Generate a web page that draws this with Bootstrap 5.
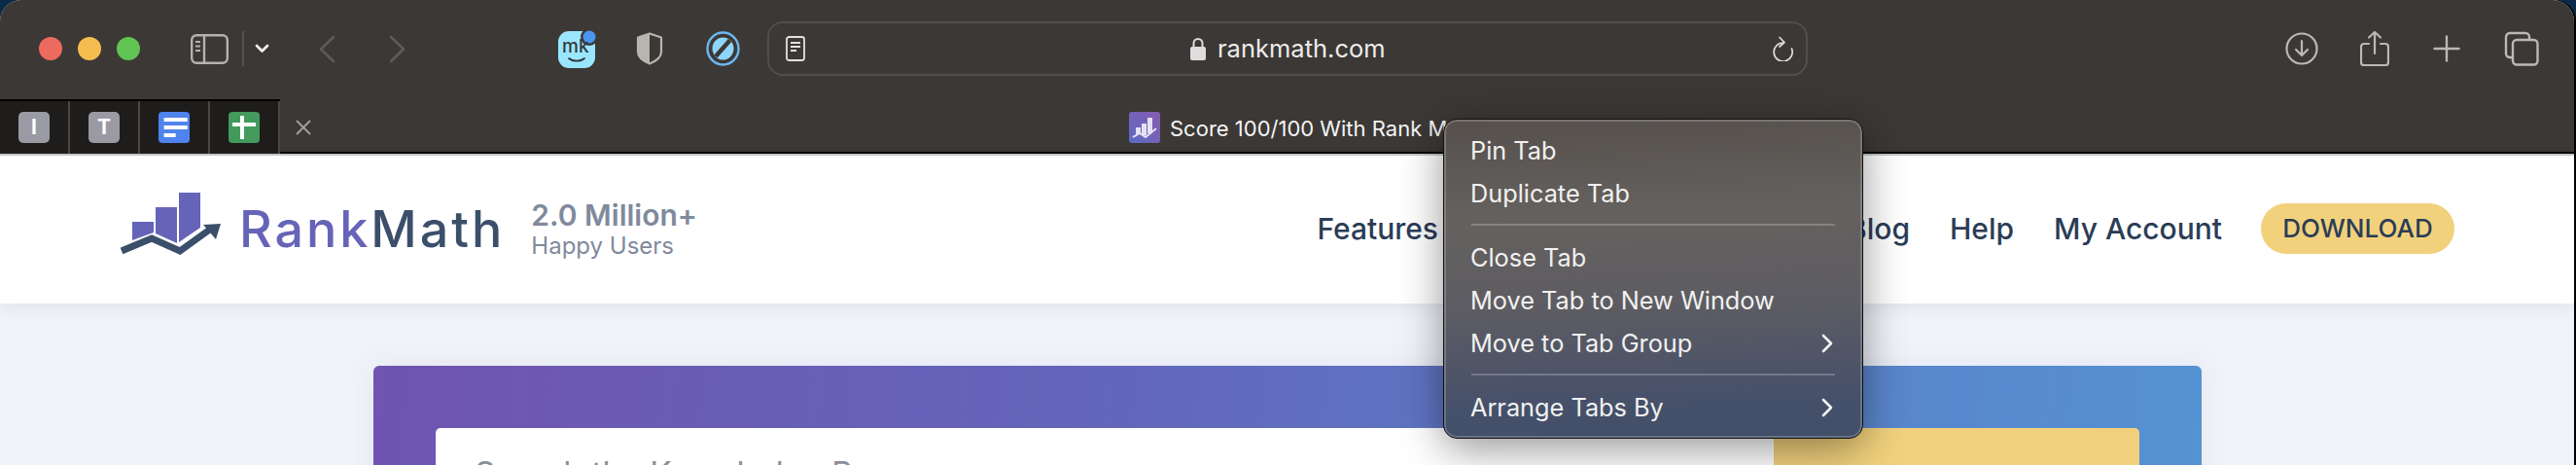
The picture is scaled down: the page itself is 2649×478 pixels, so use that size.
<!DOCTYPE html>
<html lang="en">
<head>
  <meta charset="UTF-8">
  <title>Score 100/100 With Rank Math</title>
  <link href="https://cdn.jsdelivr.net/npm/bootstrap@5.3.3/dist/css/bootstrap.min.css" rel="stylesheet">
  <style>
    html, body { height: 478px; overflow: hidden; }
    body { background: #0b2a47; font-family: Inter, "Liberation Sans", sans-serif; }

    /* safari window */
    .win { width: 2647px; height: 478px; margin-left: 0; border-radius: 22px 22px 0 0; overflow: hidden; background: #f0f3f8; position: relative; box-shadow: 2px 0 0 #000; }
    .chrome { background: #3c3835; height: 160px; border-bottom: 2px solid #c9c9c9; box-shadow: inset 0 -2px 0 #000; border-left: 0; }
    .toolbar { height: 102px; padding: 0 0 2px 40px; }
    .dot { width: 24px; height: 24px; border-radius: 50%; margin-right: 16px; }
    .dot-r { background: #ee6a5f; }
    .dot-y { background: #f5bd4f; }
    .dot-g { background: #61c554; }
    .sb-icon { margin-left: 36px; }
    .sb-sep { width: 2px; height: 36px; background: #55514e; margin-left: 14px; }
    .sb-chev { margin-left: 11px; }
    .nav-back { margin-left: 51px; }
    .nav-fwd { margin-left: 55px; }
    .ext-mk { margin-left: 157px; }
    .ext-shield { margin-left: 41px; }
    .ext-block { margin-left: 44px; }
    .addr { width: 1070px; height: 56px; margin-left: 28px; border: 2px solid #524e4b; border-radius: 16px; padding: 0 13px 0 17px; color: #ececeb; }
    .addr-host { font-size: 25.5px; line-height: 1; letter-spacing: 0; }
    .addr-mid { padding-left: 396px; gap: 12px; }
    .tool-dl { margin-left: 491px; }
    .tool-share { margin-left: 43px; }
    .tool-plus { margin-left: 45px; }
    .tool-copy { margin-left: 45px; }

    .tabrow { height: 56px; color: #fff; }
    .pinned { width: 288px; height: 56px; background: #1e1d1c; border-top: 2px solid #000; }
    .pin { width: 72px; height: 54px; border-right: 2px solid #4a4846; }
    .pin-ic { width: 32px; height: 32px; border-radius: 5px; color: #fff; font-size: 21px; font-weight: 700; line-height: 32px; text-align: center; }
    .pin-grey { background: #9a9aa4; }
    .pin-close { margin-left: 16px; margin-top: 2px; }
    .tab-fav { margin-left: 841px; margin-top: 2px; }
    .tab-title { margin-left: 10px; margin-top: 4px; font-size: 22px; white-space: nowrap; color: #f4f4f4; }

    /* context menu */
    .tab-menu.dropdown-menu { position: absolute; display: block; left: 1484px; top: 122px; width: 432px; height: 329px; padding: 10px 0 0; margin: 0; border-radius: 14px;
      background: linear-gradient(178deg, #55504c 0%, #65615e 30%, #5d5c63 58%, #45506a 88%, #434e68 100%);
      border: 1px solid #111; box-shadow: inset 0 0 0 2px rgba(255,255,255,.2), 0 10px 44px rgba(0,0,0,.42); }
    .tab-menu .dropdown-item { color: #f1f1f0; font-size: 25.3px; line-height: 44px; height: 44px; padding: 0 27px; display: flex; justify-content: space-between; align-items: center; background: none; }
    .tab-menu .dropdown-divider { border-top: 2px solid rgba(255,255,255,.22); opacity: 1; margin: 9px 28px 11px 28px; }
    .menu-arrow { margin-right: 3px; }

    /* rank math page */
    .site-head { height: 152px; background: #fff; padding: 0 123px 0 124px; box-shadow: 0 4px 16px rgba(40,60,100,.08); }
    .logo-mark { margin-top: -8px; }
    .logo-word { font-size: 52px; font-weight: 500; line-height: 1; margin-left: 14px; letter-spacing: 3px; }
    .logo-a { color: #6664b8; }
    .logo-b { color: #3b4f6b; }
    .logo-stat { margin-left: 27px; color: #7f8a9c; }
    .stat-num { font-size: 30px; font-weight: 600; line-height: 34px; }
    .stat-sub { font-size: 24px; line-height: 30px; }
    .site-nav { gap: 41px; margin-left: auto; margin-top: -3px; }
    .site-nav .nav-link { color: #2b3c56; font-size: 30px; font-weight: 500; padding: 0; line-height: 1.2; }
    .nav-first { margin-right: 380px; }
    .btn-dl.btn { background: #f1d17c; border: 0; border-radius: 26px; width: 199px; height: 52px; color: #2b3c56; font-size: 26px; font-weight: 500; padding: 0; margin-left: -1px; }

    .hero { margin: 64px 0 0 384px; width: 1880px; height: 200px; padding: 64px 64px 0 64px; border-radius: 6px; background: linear-gradient(95deg, #6f54b0 0%, #6366bb 40%, #5593d3 100%); box-shadow: 0 0 30px rgba(80,90,170,.08); }
    .search-in { height: 100px; background: #fff; border-radius: 5px 0 0 0; padding: 22px 0 0 40px; color: #8a8f98; font-size: 33.5px; }
    .search-btn { width: 376px; height: 100px; background: #f1d17c; border-radius: 0 5px 0 0; }
  </style>
</head>
<body>

<div class="win">
  <!-- browser toolbar -->
  <div class="chrome">
    <div class="toolbar d-flex align-items-center">
      <span class="dot dot-r"></span>
      <span class="dot dot-y"></span>
      <span class="dot dot-g"></span>
      <svg class="sb-icon" width="39" height="31" viewBox="0 0 39 31" fill="none" stroke="#b6b2ae" stroke-width="2.4"><rect x="1.2" y="1.2" width="36.6" height="28.6" rx="5"/><path d="M14 1v29"/><path d="M5 8h5M5 12.500h5M5 17h5" stroke-width="1.800"/></svg>
      <span class="sb-sep"></span>
      <svg class="sb-chev" width="15" height="10" viewBox="0 0 15 10" fill="none" stroke="#eeeeec" stroke-width="2.800" stroke-linecap="round" stroke-linejoin="round"><path d="M2 2l5.500 5.500L13 2"/></svg>
      <svg class="nav-back" width="17" height="29" viewBox="0 0 17 29" fill="none" stroke="#5f5b58" stroke-width="2.600" stroke-linecap="round" stroke-linejoin="round"><path d="M15 2L2 14.500 15 27"/></svg>
      <svg class="nav-fwd" width="17" height="29" viewBox="0 0 17 29" fill="none" stroke="#5f5b58" stroke-width="2.600" stroke-linecap="round" stroke-linejoin="round"><path d="M2 2l13 12.500L2 27"/></svg>

      <svg class="ext-mk" width="39" height="39" viewBox="0 0 39 39"><rect width="38" height="38" y="1" rx="11" fill="#9be6ff"/><circle cx="32" cy="7" r="9" fill="#3c3835"/><circle cx="32" cy="7" r="6.500" fill="#4a97f0"/><text x="4" y="23" font-family="Inter, sans-serif" font-size="19" font-weight="500" fill="#33383d">mk</text><path d="M11 29c4 3.500 12 3.500 16 0" fill="none" stroke="#33383d" stroke-width="1.800" stroke-linecap="round"/></svg>
      <svg class="ext-shield" width="28" height="34" viewBox="0 0 28 34"><path d="M14 1.500l12 4v15c0 5-6 9.500-12 12-6-2.500-12-7-12-12v-15z" fill="none" stroke="#b9b4af" stroke-width="2.200" stroke-linejoin="round"/><path d="M14 1.500v31c-6-2.500-12-7-12-12v-15z" fill="#b9b4af"/></svg>
      <svg class="ext-block" width="35" height="36" viewBox="0 0 35 36"><ellipse cx="17.500" cy="18" rx="16" ry="16.500" fill="none" stroke="#6cb8f2" stroke-width="2.400"/><ellipse cx="17.500" cy="18" rx="11" ry="11.500" fill="#8fd4fb"/><path d="M24.500 9.500L10 26" stroke="#3c3835" stroke-width="4.500"/></svg>

      <div class="addr d-flex align-items-center">
        <svg width="20" height="26" viewBox="0 0 20 26" fill="none" stroke="#e2e2e0"><rect x="1" y="1" width="18" height="24" rx="2.500" stroke-width="1.800"/><path d="M5 7h10M5 11h10M5 15h6" stroke-width="1.800"/></svg>
        <div class="addr-mid d-flex align-items-center flex-grow-1">
          <svg width="16" height="24" viewBox="0 0 16 24"><path d="M3.500 11V6.500a4.500 4.500 0 0 1 9 0V11" fill="none" stroke="#dedede" stroke-width="2"/><rect y="10" width="16" height="14" rx="2" fill="#dedede"/></svg>
          <span class="addr-host">rankmath.com</span>
        </div>
        <svg width="22" height="26" viewBox="0 0 22 26" fill="none" stroke="#dededc" stroke-width="1.700" stroke-linecap="round" stroke-linejoin="round"><path d="M12 7a9.500 9.500 0 1 0 8.500 6"/><path d="M8 1.500l5 5-5 4.500"/></svg>
      </div>

      <svg class="tool-dl" width="34" height="34" viewBox="0 0 34 34" fill="none" stroke="#bcb8b4" stroke-width="2.200" stroke-linecap="round" stroke-linejoin="round"><circle cx="17" cy="17" r="15.500"/><path d="M17 9v15M11 18l6 6 6-6"/></svg>
      <svg class="tool-share" width="30" height="38" viewBox="0 0 30 38" fill="none" stroke="#bcb8b4" stroke-width="2.200" stroke-linecap="round" stroke-linejoin="round"><path d="M9 14H4a3 3 0 0 0-3 3v16a3 3 0 0 0 3 3h22a3 3 0 0 0 3-3V17a3 3 0 0 0-3-3h-5"/><path d="M15 24V2M9 7.500L15 2l6 5.500"/></svg>
      <svg class="tool-plus" width="28" height="28" viewBox="0 0 28 28" fill="none" stroke="#bcb8b4" stroke-width="2.400" stroke-linecap="round"><path d="M14 1.500v25M1.500 14h25"/></svg>
      <svg class="tool-copy" width="36" height="36" viewBox="0 0 36 36" fill="none" stroke="#bcb8b4" stroke-width="2.400" stroke-linejoin="round"><path d="M8 27H6a4 4 0 0 1-4-4V6a4 4 0 0 1 4-4h16a4 4 0 0 1 4 4v2"/><rect x="9" y="9" width="25.500" height="25.500" rx="4"/></svg>
    </div>

    <!-- tab strip -->
    <div class="tabrow d-flex align-items-center">
      <div class="pinned d-flex">
        <div class="pin d-flex align-items-center justify-content-center"><div class="pin-ic pin-grey">I</div></div>
        <div class="pin d-flex align-items-center justify-content-center"><div class="pin-ic pin-grey">T</div></div>
        <div class="pin d-flex align-items-center justify-content-center">
          <svg width="32" height="32" viewBox="0 0 32 32"><rect width="32" height="32" rx="4" fill="#4f83ee"/><path d="M6 6h26v4H6zM6 14h26v4H6zM6 22h13v4H6z" fill="#fff" transform="translate(0 0) scale(.93 1)"/></svg>
        </div>
        <div class="pin d-flex align-items-center justify-content-center">
          <svg width="32" height="32" viewBox="0 0 32 32"><rect width="32" height="32" rx="4" fill="#439a5c"/><path d="M4 11h24v4H4zM12 4h4v24h-4z" fill="#fff"/></svg>
        </div>
      </div>
      <svg class="pin-close" width="16" height="16" viewBox="0 0 16 16" stroke="#a5a19d" stroke-width="1.800" stroke-linecap="round"><path d="M1.500 1.500l13 13M14.500 1.500l-13 13"/></svg>
      <svg class="tab-fav" width="32" height="32" viewBox="0 0 32 32"><defs><linearGradient id="favg" x1="0" y1="1" x2="1" y2="0"><stop offset="0" stop-color="#5b6bc4"/><stop offset="1" stop-color="#8a5ab0"/></linearGradient></defs><rect width="32" height="32" rx="3" fill="url(#favg)"/><path d="M7 16h5v7H7zM13 12h5v12h-5zM19 6h5v16h-5z" fill="#e6e2f5"/><path d="M4 26l7-4 6 4 11-9" fill="none" stroke="#e6e2f5" stroke-width="2"/></svg>
      <div class="tab-title">Score 100/100 With Rank Math</div>
    </div>
  </div>

  <!-- page content -->
  <div class="site-head d-flex align-items-center">
    <svg class="logo-mark" width="108" height="68" viewBox="0 0 108 68">
      <path d="M12 30h22v11l-22 8zM36 15h22v37L36 42zM60 0h22v36L60 51z" fill="#6664b8"/>
      <path d="M1 60l31-13 29 13 32-23" fill="none" stroke="#3b4f6b" stroke-width="7"/>
      <path d="M85 33l18-1-5 16z" fill="#3b4f6b"/>
    </svg>
    <div class="logo-word"><span class="logo-a">Rank</span><span class="logo-b">Math</span></div>
    <div class="logo-stat">
      <div class="stat-num">2.0 Million+</div>
      <div class="stat-sub">Happy Users</div>
    </div>
    <nav class="nav site-nav align-items-center">
      <a class="nav-link nav-first" href="#">Features</a>
      <a class="nav-link" href="#">Blog</a>
      <a class="nav-link" href="#">Help</a>
      <a class="nav-link" href="#">My Account</a>
      <a class="btn btn-dl d-flex align-items-center justify-content-center" href="#">DOWNLOAD</a>
    </nav>
  </div>

  <div class="hero">
    <div class="d-flex">
      <div class="search-in flex-grow-1">Search the Knowledge Base</div>
      <div class="search-btn"></div>
    </div>
  </div>

  <!-- right click menu -->
  <div class="dropdown-menu tab-menu">
    <a class="dropdown-item" href="#">Pin Tab</a>
    <a class="dropdown-item" href="#">Duplicate Tab</a>
    <hr class="dropdown-divider">
    <a class="dropdown-item" href="#">Close Tab</a>
    <a class="dropdown-item" href="#">Move Tab to New Window</a>
    <a class="dropdown-item" href="#">Move to Tab Group
      <svg class="menu-arrow" width="12" height="20" viewBox="0 0 12 20" fill="none" stroke="#f1f1f0" stroke-width="2.600" stroke-linecap="round" stroke-linejoin="round"><path d="M2 2l8 8-8 8"/></svg></a>
    <hr class="dropdown-divider">
    <a class="dropdown-item" href="#">Arrange Tabs By
      <svg class="menu-arrow" width="12" height="20" viewBox="0 0 12 20" fill="none" stroke="#f1f1f0" stroke-width="2.600" stroke-linecap="round" stroke-linejoin="round"><path d="M2 2l8 8-8 8"/></svg></a>
  </div>
</div>

<script src="https://cdn.jsdelivr.net/npm/bootstrap@5.3.3/dist/js/bootstrap.bundle.min.js"></script>
</body>
</html>
